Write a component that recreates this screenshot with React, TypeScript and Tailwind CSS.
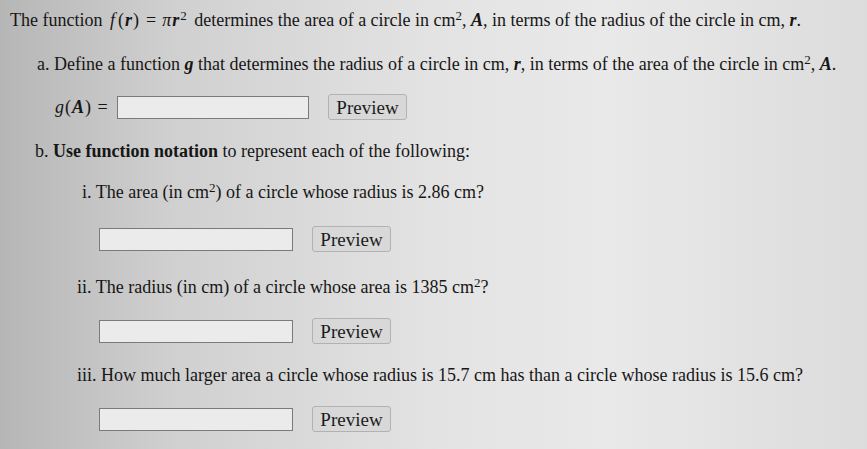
import React from 'react'

function Answer({ inputClass, buttonClass }: { inputClass: string; buttonClass: string }) {
  return (
    <div className="flex items-center">
      <div className={`h-[23px] border border-[#7a7a7a] bg-[#ebebeb] ${inputClass}`} />
      <button
        className={`h-[26px] w-[79px] rounded-[3px] border border-[#b2b2b2] bg-[#d8d8d8] font-['Liberation_Serif',serif] text-[19px] leading-none text-[#1c1c1c] ${buttonClass}`}
      >
        Preview
      </button>
    </div>
  )
}

const Sup = ({ children }: { children: React.ReactNode }) => (
  <sup className="relative -top-[0.5em] align-baseline text-[13px] leading-none">{children}</sup>
)

export default function App() {
  return (
    <div className="h-[449px] w-[867px] overflow-hidden bg-[linear-gradient(90deg,#b6b6b6_0%,#d0d0d0_20%,#e3e3e3_50%,#e9e9e9_70%,#dcdcdc_100%)] font-['Liberation_Serif',serif] text-[18px] leading-[24px] text-[#161616]">
      <p className="pl-[10px] pt-[8px] whitespace-nowrap">
        The function{' '}
        <span className="ml-[3px] tracking-[1px]">
          <i className="pr-[2px]">f</i>(<b><i>r</i></b>)
        </span>
        <span className="mx-[6px]">=</span>
        <span className="mr-[2px] tracking-[1px]">
          <i>π</i><b><i>r</i></b><Sup>2</Sup>
        </span>{' '}
        determines the area of a circle in cm<Sup>2</Sup>, <b><i>A</i></b>, in terms of the radius of the circle in cm, <b><i>r</i></b>.
      </p>

      <p className="mt-[20px] pl-[37px] whitespace-nowrap">
        a. Define a function <b><i>g</i></b> that determines the radius of a circle in cm, <b><i>r</i></b>, in terms of the area of the circle in cm<Sup>2</Sup>, <b><i>A</i></b>.
      </p>

      <div className="mt-[18px] flex items-center pl-[55px]">
        <span className="w-[62px] whitespace-nowrap tracking-[1px]">
          <i>g</i>(<b><i>A</i></b>) =
        </span>
        <Answer inputClass="w-[192px]" buttonClass="ml-[19px]" />
      </div>

      <p className="mt-[19px] pl-[35px] whitespace-nowrap">
        b. <b>Use function notation</b> to represent each of the following:
      </p>

      <p className="mt-[17px] pl-[82px] whitespace-nowrap">
        i. The area (in cm<Sup>2</Sup>) of a circle whose radius is 2.86 cm?
      </p>

      <div className="mt-[22px] pl-[99px]">
        <Answer inputClass="w-[194px]" buttonClass="ml-[19px]" />
      </div>

      <p className="mt-[23px] pl-[77px] whitespace-nowrap">
        ii. The radius (in cm) of a circle whose area is 1385 cm<Sup>2</Sup>?
      </p>

      <div className="mt-[19px] pl-[99px]">
        <Answer inputClass="w-[194px]" buttonClass="ml-[19px]" />
      </div>

      <p className="mt-[19px] pl-[77px] whitespace-nowrap">
        iii. How much larger area a circle whose radius is 15.7 cm has than a circle whose radius is 15.6 cm?
      </p>

      <div className="mt-[19px] pl-[99px]">
        <Answer inputClass="w-[194px]" buttonClass="ml-[19px]" />
      </div>
    </div>
  )
}
